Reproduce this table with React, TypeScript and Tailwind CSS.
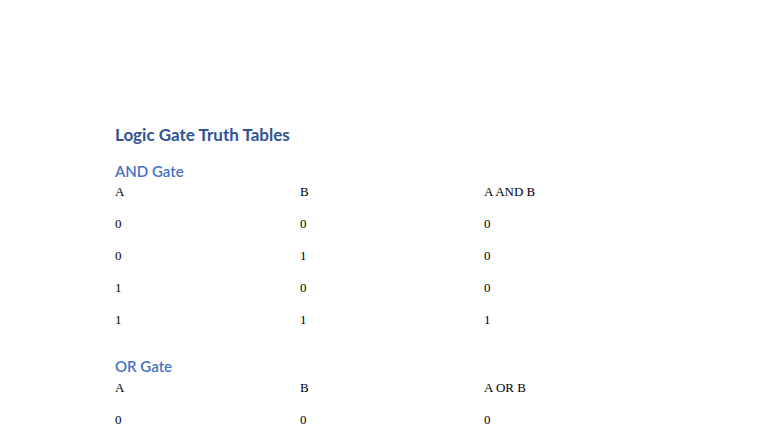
const andRows = [
  ["0", "0", "0"],
  ["0", "1", "0"],
  ["1", "0", "0"],
  ["1", "1", "1"],
];
const orRows = [["0", "0", "0"]];

function Table({ head, rows }: { head: string[]; rows: string[][] }) {
  return (
    <div className="flex flex-col">
      {[head, ...rows].map((r, i) => (
        <div key={i} className="grid grid-cols-[185px_184px_185px] h-[32px] items-start">
          {r.map((c, j) => (
            <div key={j} className="text-[13px] leading-[14px] text-black font-['Liberation_Serif',serif]">{c}</div>
          ))}
        </div>
      ))}
    </div>
  );
}

export default function App() {
  return (
    <div className="w-[784px] h-[441px] bg-white overflow-hidden pt-[125px] pl-[115px]">
      <div className="text-[17px] leading-[20px] font-bold text-[#2F5496] font-['Lato',sans-serif]">Logic Gate Truth Tables</div>
      <div className="mt-[17px] text-[15px] leading-[18px] font-semibold text-[#4472C4] font-['Lato',sans-serif]">AND Gate</div>
      <div className="mt-[5px]">
        <Table head={["A", "B", "A AND B"]} rows={andRows} />
      </div>
      <div className="mt-[12px] text-[15px] leading-[18px] font-semibold text-[#4472C4] font-['Lato',sans-serif]">OR Gate</div>
      <div className="mt-[6px]">
        <Table head={["A", "B", "A OR B"]} rows={orRows} />
      </div>
    </div>
  );
}
